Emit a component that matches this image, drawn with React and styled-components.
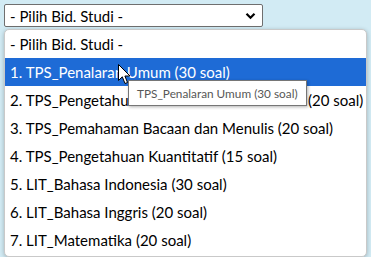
import { createGlobalStyle } from "styled-components"
import styled from "styled-components"

const options = [
    "1. TPS_Penalaran Umum (30 soal)",
    "2. TPS_Pengetahuan dan Pemahaman Umum (20 soal)",
    "3. TPS_Pemahaman Bacaan dan Menulis (20 soal)",
    "4. TPS_Pengetahuan Kuantitatif (15 soal)",
    "5. LIT_Bahasa Indonesia (30 soal)",
    "6. LIT_Bahasa Inggris (20 soal)",
    "7. LIT_Matematika (20 soal)",
]

export default function App(){
    return (
        <>
            <GlobalStyle />
            <Page>
                <Select>
                    <span>- Pilih Bid. Studi -</span>
                    <svg width="11" height="8" viewBox="0 0 11 8">
                        <path d="M1.5 1.8 L5.5 5.8 L9.5 1.8" fill="none" stroke="#000" strokeWidth="2.2" />
                    </svg>
                </Select>
                <ListBox>
                    <Option>- Pilih Bid. Studi -</Option>
                    {options.map((text, i) => (
                        <Option key={text} $active={i === 0}>{text}</Option>
                    ))}
                </ListBox>
                <Tooltip>TPS_Penalaran Umum (30 soal)</Tooltip>
                <Cursor width="13" height="21" viewBox="0 0 13 21">
                    <path d="M0.5 0.5 L0.5 16.5 L4.3 12.8 L7 19.5 L9.5 18.5 L6.9 12 L12 12 Z" fill="#fff" stroke="#000" strokeWidth="1" strokeLinejoin="miter" />
                </Cursor>
            </Page>
        </>
    )
}

const GlobalStyle = createGlobalStyle`
    body {
        margin: 0;
        background: #d2ebf4;
        font-family: 'Lato', 'Open Sans', sans-serif;
    }
`

const Page = styled.div`
    position: relative;
    width: 371px;
    height: 257px;
    overflow: hidden;
    padding: 4px 0 0 4px;
    box-sizing: border-box;
`

const Select = styled.div`
    width: 259px;
    height: 23px;
    box-sizing: border-box;
    border: 1px solid #6f6f6f;
    border-radius: 2px;
    background: #ffffff;
    display: flex;
    align-items: center;
    justify-content: space-between;
    padding: 0 6px 0 5px;
    font-size: 15px;
    color: #000000;

    svg {
        margin-top: 1px;
    }
`

const ListBox = styled.div`
    margin-top: 2px;
    width: 363px;
    box-sizing: border-box;
    background: #ffffff;
    border: 1px solid #c9c9c9;
    border-radius: 5px;
    box-shadow: 0 1px 4px rgba(0, 0, 0, 0.25);
    padding: 0 0 2px;
    display: flex;
    flex-direction: column;
`

const Option = styled.div`
    height: 28px;
    display: flex;
    align-items: center;
    padding-left: 5px;
    font-size: 15px;
    white-space: nowrap;
    color: ${p => p.$active ? "#ffffff" : "#000000"};
    background: ${p => p.$active ? "#1e6bd6" : "transparent"};
`

const Tooltip = styled.div`
    position: absolute;
    left: 128px;
    top: 80px;
    height: 26px;
    box-sizing: border-box;
    padding: 0 8px;
    display: flex;
    align-items: center;
    background: #ffffff;
    border: 1px solid #767676;
    box-shadow: 1px 1px 3px rgba(0, 0, 0, 0.3);
    font-size: 11.8px;
    color: #575757;
    white-space: nowrap;
`

const Cursor = styled.svg`
    position: absolute;
    left: 118px;
    top: 64px;
`
